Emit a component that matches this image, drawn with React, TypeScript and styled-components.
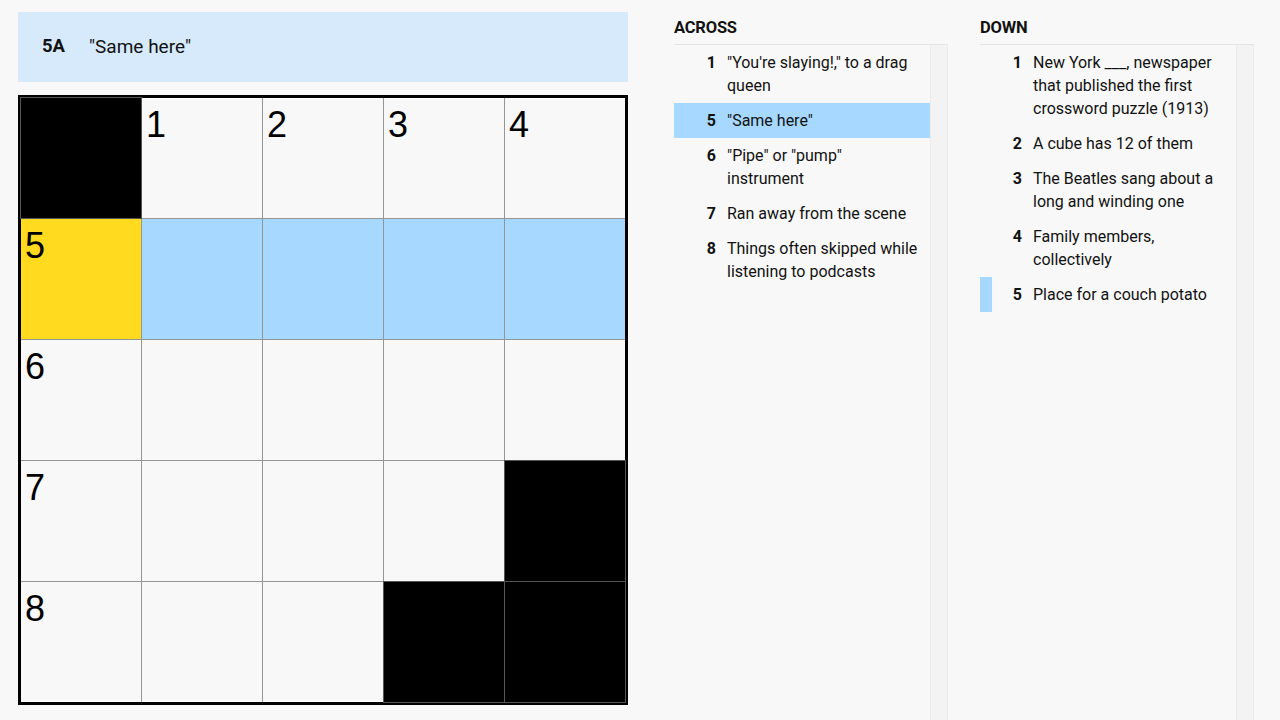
import React from "react";
import styled, { createGlobalStyle } from "styled-components";

const GlobalStyle = createGlobalStyle`
	html, body {
		margin: 0;
		padding: 0;
		background: #f8f8f8;
	}
	body {
		font-family: Roboto, "Liberation Sans", Arial, sans-serif;
		color: #121212;
	}
`;

const Page = styled.div`
	display: flex;
	align-items: flex-start;
	height: 720px;
	padding: 0 18px;
	overflow: hidden;
	box-sizing: border-box;
`;

const Board = styled.div`
	width: 610px;
	padding-top: 12px;
	margin-right: 46px;
	display: flex;
	flex-direction: column;
	gap: 13px;
`;

const ClueBar = styled.div`
	height: 70px;
	background: #d6eafc;
	display: flex;
	align-items: center;
	padding: 0 0 2px 24px;
	box-sizing: border-box;
	font-size: 19px;
`;

const ClueBarNumber = styled.span`
	font-weight: 700;
	font-size: 18.5px;
	width: 47px;
`;

const Grid = styled.div`
	display: grid;
	grid-template-columns: repeat(5, 120px);
	grid-template-rows: repeat(5, 120px);
	gap: 1px;
	background: #959595;
	border: 3px solid #000;
	width: 604px;
`;

type CellKind = "block" | "open" | "word" | "focus";

const cellColors: Record<CellKind, string> = {
	block: "#000",
	open: "#f8f8f8",
	word: "#a7d8ff",
	focus: "#ffda1f",
};

const Cell = styled.div<{ $kind: CellKind }>`
	position: relative;
	background: ${(p) => cellColors[p.$kind]};
	box-shadow: ${(p) => (p.$kind === "block" ? "0 0 0 1px #555" : "none")};
`;

const CellNumber = styled.span`
	position: absolute;
	top: 9px;
	left: 4px;
	font-family: "Liberation Sans", Arial, sans-serif;
	font-size: 36px;
	line-height: 1;
	color: #000;
`;

const Column = styled.div`
	width: 274px;
	height: 720px;
	display: flex;
	flex-direction: column;
	padding-top: 16px;
	box-sizing: border-box;
	& + & {
		margin-left: 32px;
	}
`;

const Heading = styled.h3`
	margin: 0;
	font-size: 16.5px;
	line-height: 23px;
	font-weight: 700;
	letter-spacing: -0.2px;
	padding-bottom: 5px;
	border-bottom: 1px solid #e4e4e4;
`;

const ListArea = styled.div`
	flex: 1;
	display: flex;
`;

const List = styled.ol`
	list-style: none;
	margin: 0;
	padding: 0;
	width: 256px;
`;

const Track = styled.div`
	width: 16px;
	background: #f3f3f3;
	border-left: 1px solid #ebebeb;
	border-right: 1px solid #ebebeb;
`;

const Item = styled.li<{ $active?: boolean; $cross?: boolean }>`
	display: flex;
	padding: 6px 12px 6px 0;
	font-size: 16px;
	line-height: 23px;
	background: ${(p) => (p.$active ? "#a7d8ff" : "transparent")};
	box-shadow: ${(p) => (p.$cross ? "inset 12px 0 0 #a7d8ff" : "none")};
`;

const ItemNumber = styled.span`
	flex: 0 0 42px;
	text-align: right;
	font-weight: 700;
	margin-right: 11px;
`;

const ItemText = styled.span`
	flex: 1;
`;

const layout: CellKind[][] = [
	["block", "open", "open", "open", "open"],
	["focus", "word", "word", "word", "word"],
	["open", "open", "open", "open", "open"],
	["open", "open", "open", "open", "block"],
	["open", "open", "open", "block", "block"],
];

const numbers: Record<string, number> = {
	"0-1": 1,
	"0-2": 2,
	"0-3": 3,
	"0-4": 4,
	"1-0": 5,
	"2-0": 6,
	"3-0": 7,
	"4-0": 8,
};

type Clue = { n: number; text: string; active?: boolean; cross?: boolean };

const across: Clue[] = [
	{ n: 1, text: "\"You're slaying!,\" to a drag queen" },
	{ n: 5, text: "\"Same here\"", active: true },
	{ n: 6, text: "\"Pipe\" or \"pump\" instrument" },
	{ n: 7, text: "Ran away from the scene" },
	{ n: 8, text: "Things often skipped while listening to podcasts" },
];

const down: Clue[] = [
	{ n: 1, text: "New York ___, newspaper that published the first crossword puzzle (1913)" },
	{ n: 2, text: "A cube has 12 of them" },
	{ n: 3, text: "The Beatles sang about a long and winding one" },
	{ n: 4, text: "Family members, collectively" },
	{ n: 5, text: "Place for a couch potato", cross: true },
];

const ClueColumn = ({ title, clues }: { title: string; clues: Clue[] }) => (
	<Column>
		<Heading>{title}</Heading>
		<ListArea>
			<List>
				{clues.map((c) => (
					<Item key={c.n} $active={c.active} $cross={c.cross}>
						<ItemNumber>{c.n}</ItemNumber>
						<ItemText>{c.text}</ItemText>
					</Item>
				))}
			</List>
			<Track />
		</ListArea>
	</Column>
);

export default function App() {
	return (
		<>
			<GlobalStyle />
			<Page>
				<Board>
					<ClueBar>
						<ClueBarNumber>5A</ClueBarNumber>
						<span>"Same here"</span>
					</ClueBar>
					<Grid>
						{layout.map((row, r) =>
							row.map((kind, c) => (
								<Cell key={`${r}-${c}`} $kind={kind}>
									{numbers[`${r}-${c}`] && <CellNumber>{numbers[`${r}-${c}`]}</CellNumber>}
								</Cell>
							))
						)}
					</Grid>
				</Board>
				<ClueColumn title="ACROSS" clues={across} />
				<ClueColumn title="DOWN" clues={down} />
			</Page>
		</>
	);
}
